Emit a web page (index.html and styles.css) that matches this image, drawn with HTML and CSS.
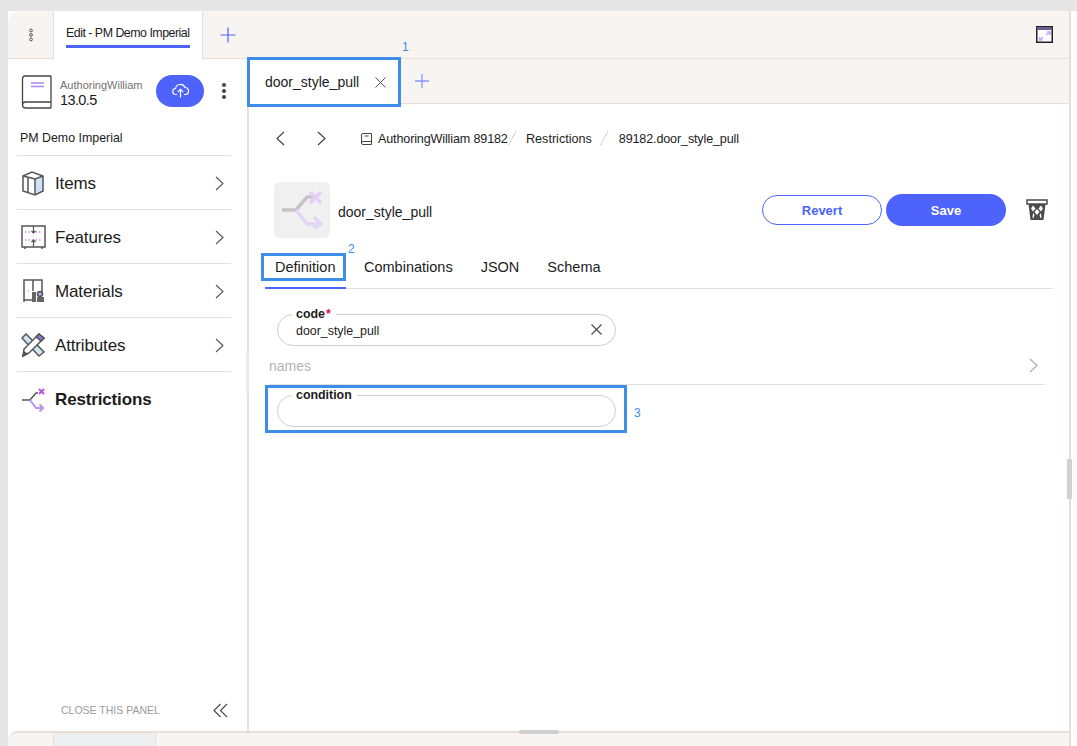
FILE: index.html
```html
<!DOCTYPE html>
<html>
<head>
    <meta charset="UTF-8">
    <meta name="viewport" content="width=device-width, initial-scale=1.0">
    <title>Edit - PM Demo Imperial</title>
    <link rel="stylesheet" href="styles.css">
</head>
<body>
    <div class="app">
        <div class="top-bar">
            <div class="top-menu">
                <svg width="6" height="14" viewBox="0 0 6 14" fill="none" stroke="#555" stroke-width="1"><circle cx="3" cy="2.5" r="1.4"/><circle cx="3" cy="7" r="1.4"/><circle cx="3" cy="11.5" r="1.4"/></svg>
            </div>
            <div class="top-tab"><span class="top-tab-label">Edit - PM Demo Imperial</span></div>
            <div class="top-add">
                <svg width="16" height="16" viewBox="0 0 16 16" stroke="#4d63fb" stroke-width="1.2"><path d="M8 0.5v15M0.5 8h15"/></svg>
            </div>
            <div class="top-expand">
                <svg width="17" height="17" viewBox="0 0 17 17" fill="none"><rect x="0.75" y="0.75" width="15.5" height="15.5" fill="#fff" stroke="#222" stroke-width="1.5"/><rect x="1" y="1" width="15" height="3" fill="#6f5a94"/><path d="M10 9l4-3M11 6h3v3M7 11l-3 3M3.500 11v3h3" stroke="#c9a8f5" stroke-width="1.500"/></svg>
            </div>
        </div>

        <div class="workspace">
            <aside class="sidebar">
                <div class="side-head">
                    <svg class="side-book" width="31" height="34" viewBox="0 0 31 34" fill="none" stroke="#444" stroke-width="1.3"><path d="M30 1H4Q1.500 1 1.500 4v26q0 3 3 3H30M1.500 30q0-3 3-3H30V1M30 27v6"/><path d="M10 8h13M10 11.500h13" stroke="#ad85ee" stroke-width="1.500"/></svg>
                    <div class="side-info">
                        <div class="side-author">AuthoringWilliam</div>
                        <div class="side-version">13.0.5</div>
                    </div>
                    <button class="upload-btn">
                        <svg width="17" height="15" viewBox="0 0 17 15" fill="none" stroke="#fff" stroke-width="1.200"><path d="M5 11.500H4a3 3 0 0 1-.5-6A5 5 0 0 1 13 4.500a3.500 3.500 0 0 1 0 7h-1"/><path d="M8.500 14.500V6.500M5.800 9l2.700-2.700L11.200 9"/></svg>
                    </button>
                    <div class="side-dots"><i></i><i></i><i></i></div>
                </div>
                <div class="side-project">PM Demo Imperial</div>

                <nav class="side-nav">
                    <div class="nav-row">
                        <span class="nav-icon">
                            <svg width="24" height="25" viewBox="0 0 24 25" fill="none" stroke="#555" stroke-width="1.500"><path d="M14 8l8-3v15l-7 3z" fill="#cfe2f8" stroke="none"/><path d="M2 5l9-4 11 4v15l-8 4-12-4z"/><path d="M2 5l12 3 8-3M14 8v16M7 7v15"/></svg>
                        </span>
                        <span class="nav-label">Items</span>
                        <svg class="nav-arrow" width="9" height="15" viewBox="0 0 9 15" fill="none" stroke="#555" stroke-width="1.100"><path d="M1 1l7 6.500L1 14"/></svg>
                    </div>
                    <div class="nav-row">
                        <span class="nav-icon">
                            <svg width="25" height="25" viewBox="0 0 25 25" fill="none" stroke="#555" stroke-width="1.500"><path d="M1 1h23v21H1zM4 22v2M21 22v2"/><path d="M4 7h17M4 15h17" stroke="#d98be8" stroke-dasharray="1.500 2"/><path d="M12.500 1v6M10.500 6l2 2 2-2M12.500 22v-6M10.500 17l2-2 2 2" stroke-width="1.200"/></svg>
                        </span>
                        <span class="nav-label">Features</span>
                        <svg class="nav-arrow" width="9" height="15" viewBox="0 0 9 15" fill="none" stroke="#555" stroke-width="1.100"><path d="M1 1l7 6.500L1 14"/></svg>
                    </div>
                    <div class="nav-row">
                        <span class="nav-icon">
                            <svg width="25" height="25" viewBox="0 0 25 25" fill="none" stroke="#555" stroke-width="1.500"><path d="M3 23V1h18v13M12 1v11M3 21h8"/><path d="M7 12h1" stroke="#c9a8f5"/><rect x="11" y="13" width="4" height="10" fill="#666" stroke="none"/><circle cx="19" cy="15" r="2.500" fill="#b9a0e6" stroke="#555"/><rect x="16" y="18" width="7" height="5" fill="#666" stroke="none"/></svg>
                        </span>
                        <span class="nav-label">Materials</span>
                        <svg class="nav-arrow" width="9" height="15" viewBox="0 0 9 15" fill="none" stroke="#555" stroke-width="1.100"><path d="M1 1l7 6.500L1 14"/></svg>
                    </div>
                    <div class="nav-row">
                        <span class="nav-icon">
                            <svg width="25" height="25" viewBox="0 0 25 25" fill="none" stroke="#555" stroke-width="1.500"><path d="M5 1L1 5l17 18 5-4z" fill="#cfe6f5"/><path d="M18 1l5 4L8 20l-6 3 1-7z" fill="#fff"/><path d="M18 1l5 4-3 3-5-4z" fill="#8f78c8"/><path d="M2 23l1-4 3 2z" fill="#555"/></svg>
                        </span>
                        <span class="nav-label">Attributes</span>
                        <svg class="nav-arrow" width="9" height="15" viewBox="0 0 9 15" fill="none" stroke="#555" stroke-width="1.100"><path d="M1 1l7 6.500L1 14"/></svg>
                    </div>
                    <div class="nav-row nav-active">
                        <span class="nav-icon">
                            <svg width="25" height="25" viewBox="0 0 25 25" fill="none" stroke="#555" stroke-width="1.500"><path d="M1 12h8l6-7h2"/><path d="M9 12l6 8h7M18.500 16.500l3.500 3.500-3.500 3.500" stroke="#b594ee" stroke-width="2"/><path d="M18 1l5 5M23 1l-5 5" stroke="#c04fe8" stroke-width="2"/></svg>
                        </span>
                        <span class="nav-label">Restrictions</span>
                    </div>
                </nav>

                <div class="side-foot">
                    <span class="close-label">CLOSE THIS PANEL</span>
                    <svg width="15" height="15" viewBox="0 0 15 15" fill="none" stroke="#444" stroke-width="1.100"><path d="M7.500 1L1 7.500 7.500 14M14 1L7.500 7.500 14 14"/></svg>
                </div>
                <div class="side-handle"></div>
            </aside>

            <main class="main">
                <div class="doc-tabs">
                    <div class="doc-tab">
                        <span>door_style_pull</span>
                        <svg width="11" height="11" viewBox="0 0 11 11" stroke="#555" stroke-width="1"><path d="M0.500 0.500l10 10M10.500 0.500l-10 10"/></svg>
                    </div>
                    <div class="doc-add">
                        <svg width="14" height="14" viewBox="0 0 14 14" stroke="#8a97fa" stroke-width="1.300"><path d="M7 0v14M0 7h14"/></svg>
                    </div>
                </div>

                <div class="crumbs">
                    <svg class="crumb-arrow crumb-back" width="9" height="15" viewBox="0 0 9 15" fill="none" stroke="#444" stroke-width="1.200"><path d="M8 1L1 7.500 8 14"/></svg>
                    <svg class="crumb-arrow" width="9" height="15" viewBox="0 0 9 15" fill="none" stroke="#444" stroke-width="1.200"><path d="M1 1l7 6.500L1 14"/></svg>
                    <svg class="crumb-book" width="11" height="12" viewBox="0 0 11 12" fill="none" stroke="#444" stroke-width="1"><path d="M10.500 0.500H2Q0.500 0.500 0.500 2v8q0 1.500 1.500 1.500h8.500zM0.500 9.500q0-1 1.500-1h8.500M3.500 3h4"/></svg>
                    <span class="crumb-first">AuthoringWilliam 89182</span>
                    <span class="crumb-sep"></span>
                    <span class="crumb-second">Restrictions</span>
                    <span class="crumb-sep crumb-sep-wide"></span>
                    <span class="crumb-last">89182.door_style_pull</span>
                </div>

                <div class="item-head">
                    <div class="item-tile">
                        <svg width="42" height="38" viewBox="0 0 42 38" fill="none" stroke-width="3.500"><path d="M1 19h14l11-13h6" stroke="#c4c4c4"/><path d="M15 19l11 14h13M33 26l7 7-7 4" stroke="#e2d6f6"/><path d="M29 1l11 11M40 1L29 12" stroke="#e6cdf5"/></svg>
                    </div>
                    <span class="item-name">door_style_pull</span>
                    <button class="btn btn-revert">Revert</button>
                    <button class="btn btn-save">Save</button>
                    <svg class="trash" width="22" height="22" viewBox="0 0 22 22" fill="none"><path d="M1 1h20v4H1z" stroke="#4a4a4a" stroke-width="1.500"/><path d="M2.500 5h17l-2 16h-13z" fill="#4a4a4a"/><path d="M7 6.500l2.500 3-2.500 3-2-3zM15 6.500l2 3-2 3-2.500-3zM11 10l2.500 3-2.500 3-2.500-3zM7 14l1.500 2-1 3h-1zM15 14l.500 5h-1l-1-3z" fill="#fff"/></svg>
                </div>

                <div class="tabs">
                    <span class="tab tab-active">Definition</span>
                    <span class="tab">Combinations</span>
                    <span class="tab">JSON</span>
                    <span class="tab">Schema</span>
                </div>

                <fieldset class="field field-code">
                    <legend>code<em>*</em></legend>
                    <span class="field-value">door_style_pull</span>
                    <svg width="11" height="11" viewBox="0 0 11 11" stroke="#444" stroke-width="1.100"><path d="M0.500 0.500l10 10M10.500 0.500l-10 10"/></svg>
                </fieldset>

                <div class="names-row">
                    <span>names</span>
                    <svg width="9" height="15" viewBox="0 0 9 15" fill="none" stroke="#aaa" stroke-width="1.100"><path d="M1 1l7 6.500L1 14"/></svg>
                </div>

                <fieldset class="field field-condition">
                    <legend>condition</legend>
                </fieldset>
            </main>
        </div>

        <div class="bottom-bar">
            <div class="bottom-tab"></div>
            <div class="bottom-handle"></div>
        </div>
    </div>

    <div class="scroll-handle"></div>

    <!-- numbered callouts drawn over the shot -->
    <div class="mark mark-1"></div>
    <div class="mark mark-2"></div>
    <div class="mark mark-3"></div>
    <span class="mark-num num-1">1</span>
    <span class="mark-num num-2">2</span>
    <span class="mark-num num-3">3</span>
</body>
</html>
```

FILE: styles.css
```css
* {
    box-sizing: border-box;
}

html,
body {
    height: 100%;
}

body {
    margin: 0;
    background-color: #fff;
    font-family: "Liberation Sans", Arial, sans-serif;
    color: #1c1c1c;
    overflow: hidden;
    position: relative;
}

body::before {
    content: "";
    position: absolute;
    left: 0;
    top: 0;
    width: 100%;
    height: 11px;
    background-color: #e6e6e6;
}

body::after {
    content: "";
    position: absolute;
    left: 0;
    top: 0;
    width: 8px;
    height: 100%;
    background-color: #e6e6e6;
}

.app {
    position: absolute;
    left: 8px;
    top: 11px;
    width: 1063px;
    height: 735px;
    display: flex;
    flex-direction: column;
    border-right: 2px solid #e8dfd8;
}

/* top bar */
.top-bar {
    height: 48px;
    flex: none;
    display: flex;
    align-items: stretch;
    background-color: #f8f4f1;
    border-bottom: 1px solid #e8dfd8;
    border-top-left-radius: 12px;
}

.top-menu {
    width: 45px;
    display: flex;
    align-items: center;
    justify-content: center;
}

.top-tab {
    width: 150px;
    height: 48px;
    background-color: #fff;
    border-left: 1px solid #e8dfd8;
    border-right: 1px solid #e8dfd8;
    padding: 15px 12px 0;
}

.top-tab-label {
    display: block;
    font-size: 12.400px;
    letter-spacing: -0.500px;
    line-height: 15px;
    padding-bottom: 4px;
    border-bottom: 3px solid #4d63fb;
    white-space: nowrap;
}

.top-add {
    width: 50px;
    display: flex;
    align-items: center;
    justify-content: center;
}

.top-expand {
    margin-left: auto;
    padding: 15px 16px 0 0;
}

/* sidebar */
.workspace {
    flex: 1;
    display: flex;
    min-height: 0;
}

.sidebar {
    width: 241px;
    flex: none;
    position: relative;
    display: flex;
    flex-direction: column;
    background-color: #fff;
    border-right: 2px solid #e8dfd8;
    border-bottom-left-radius: 12px;
    padding: 16px 16px 0 9px;
}

.side-head {
    display: flex;
    align-items: center;
    height: 34px;
    padding-left: 4px;
}

.side-book {
    flex: none;
}

.side-info {
    margin-left: 8px;
    width: 96px;
    padding-top: 3px;
}

.side-author {
    font-size: 11px;
    line-height: 14px;
    color: #77706c;
}

.side-version {
    font-size: 14.500px;
    letter-spacing: -0.600px;
    line-height: 17px;
}

.upload-btn {
    width: 48px;
    height: 32px;
    flex: none;
    border: none;
    border-radius: 16px;
    background-color: #4d63fb;
    padding: 2px 0 0;
    margin-top: -2px;
}

.side-dots {
    display: flex;
    flex-direction: column;
    gap: 2px;
    margin: -2px 0 0 18px;
}

.side-dots i {
    display: block;
    width: 4px;
    height: 4px;
    border-radius: 50%;
    background-color: #444;
}

.side-project {
    font-size: 12.400px;
    line-height: 15px;
    padding: 22px 0 9px 3px;
}

.side-nav {
    border-top: 1px solid #e8dfd8;
}

.nav-row {
    height: 54px;
    display: flex;
    align-items: center;
    border-bottom: 1px solid #e8dfd8;
    padding: 2px 7px 0 4px;
    font-size: 17px;
}

.nav-active {
    border-bottom: none;
    font-weight: bold;
}

.nav-icon {
    width: 34px;
    height: 25px;
    flex: none;
}

.nav-label {
    flex: 1;
    letter-spacing: -0.150px;
}

.side-foot {
    margin-top: auto;
    height: 31px;
    display: flex;
    align-items: flex-start;
    justify-content: space-between;
    padding: 3px 3px 0 44px;
}

.close-label {
    font-size: 10.500px;
    line-height: 15px;
    color: #9b9b9b;
    white-space: nowrap;
}

.side-handle {
    position: absolute;
    right: -2px;
    top: 294px;
    width: 3px;
    height: 40px;
    background-color: #ececec;
    border-radius: 2px;
}

/* main */
.main {
    flex: 1;
    min-width: 0;
    background-color: #fff;
}

.doc-tabs {
    height: 45px;
    display: flex;
    background-color: #f8f4f1;
    border-bottom: 1px solid #e8dfd8;
}

.doc-tab {
    width: 150px;
    height: 45px;
    background-color: #fff;
    border-right: 1px solid #d9d2cc;
    display: flex;
    align-items: center;
    justify-content: space-between;
    padding: 1px 12px 0 16px;
    font-size: 14px;
}

.doc-add {
    width: 46px;
    display: flex;
    align-items: center;
    justify-content: center;
}

.crumbs {
    height: 69px;
    display: flex;
    align-items: center;
    padding: 0 0 0 27px;
    font-size: 12.600px;
    white-space: nowrap;
}

.crumb-arrow {
    margin-right: 30px;
}

.crumb-back {
    margin-right: 32px;
}

.crumb-book {
    margin: 0 6px 0 5px;
}

.crumb-first {
    width: 130px;
    letter-spacing: -0.150px;
}

.crumb-sep {
    width: 18px;
    height: 15px;
    flex: none;
    background: linear-gradient(to bottom right, transparent 46%, #e8dfd8 46%, #e8dfd8 56%, transparent 56%) no-repeat 0 0 / 8px 15px;
}

.crumb-sep-wide {
    width: 27px;
    background-position: 8px 0;
}

.crumb-last {
    letter-spacing: -0.150px;
}

.item-head {
    height: 56px;
    margin-top: 9px;
    display: flex;
    align-items: center;
    padding-left: 25px;
}

.item-tile {
    width: 56px;
    height: 56px;
    flex: none;
    background-color: #f0f0f0;
    border-radius: 6px;
    display: flex;
    align-items: center;
    justify-content: center;
}

.item-name {
    margin-left: 8px;
    margin-top: 4px;
    font-size: 14px;
    flex: 1;
}

.btn {
    width: 120px;
    font-family: inherit;
    font-size: 13px;
    font-weight: bold;
    border-radius: 16px;
}

.btn-revert {
    height: 30px;
    background-color: #fff;
    border: 1px solid #4d63fb;
    color: #4d63fb;
}

.btn-save {
    height: 32px;
    margin-left: 4px;
    background-color: #4d63fb;
    border: none;
    color: #fff;
}

.trash {
    margin: 0 21px 0 20px;
}

.tabs {
    margin: 16px 16px 0 16px;
    height: 35px;
    display: flex;
    align-items: flex-start;
    border-bottom: 1px solid #e8dfd8;
    font-size: 14.500px;
}

.tab {
    padding: 6px 0 0;
    margin-right: 28px;
    line-height: 15px;
}

.tab-active {
    width: 81px;
    height: 35px;
    padding-left: 10px;
    margin-right: 18px;
    border-bottom: 2px solid #4d63fb;
}

.field {
    margin: 0 0 0 28px;
    width: 339px;
    height: 38px;
    min-width: 0;
    border: 1px solid #cfcfcf;
    border-radius: 16px;
    padding: 0 13px 0 14px;
    display: flex;
    align-items: center;
    justify-content: space-between;
}

.field legend {
    padding: 0 5px 0 4px;
    font-size: 12.400px;
    font-weight: bold;
    line-height: 12px;
}

.field legend em {
    color: #e0103a;
    font-style: normal;
    margin-left: 1px;
}

.field-code {
    margin-top: 19px;
}

.field-value {
    font-size: 12.400px;
    line-height: 15px;
    margin: -2px 0 0 4px;
}

.field-code svg {
    margin-top: -6px;
}

.names-row {
    margin: 12px 24px 0 20px;
    height: 27px;
    display: flex;
    align-items: flex-start;
    justify-content: space-between;
    padding: 0 7px 0 0;
    border-bottom: 1px solid #e8dfd8;
    font-size: 14px;
    color: #b3b3b3;
    line-height: 17px;
}

.field-condition {
    margin-top: 4px;
}

/* bottom */
.bottom-bar {
    height: 15px;
    flex: none;
    position: relative;
    display: flex;
    background-color: #f8f4f1;
    border-top: 2px solid #e8dfd8;
    border-top-left-radius: 10px;
}

.bottom-tab {
    margin-left: 45px;
    width: 103px;
    background-color: #eeeff1;
    border-left: 1px solid #e8dfd8;
    border-right: 1px solid #e8dfd8;
}

.bottom-handle {
    position: absolute;
    left: 511px;
    top: -3px;
    width: 40px;
    height: 4px;
    border-radius: 2px;
    background-color: #cfcfcf;
}

.scroll-handle {
    position: absolute;
    left: 1067px;
    top: 459px;
    width: 5px;
    height: 40px;
    background-color: #cfd1d3;
}

/* callouts */
.mark {
    position: absolute;
    border: 3px solid #3d8ee8;
}

.mark-1 {
    left: 247px;
    top: 57px;
    width: 154px;
    height: 50px;
}

.mark-2 {
    left: 261px;
    top: 253px;
    width: 85px;
    height: 28px;
}

.mark-3 {
    left: 265px;
    top: 385px;
    width: 362px;
    height: 48px;
}

.mark-num {
    position: absolute;
    font-size: 12px;
    line-height: 14px;
    color: #3d8ee8;
}

.num-1 {
    left: 402px;
    top: 40px;
}

.num-2 {
    left: 348px;
    top: 242px;
}

.num-3 {
    left: 634px;
    top: 406px;
}
```
